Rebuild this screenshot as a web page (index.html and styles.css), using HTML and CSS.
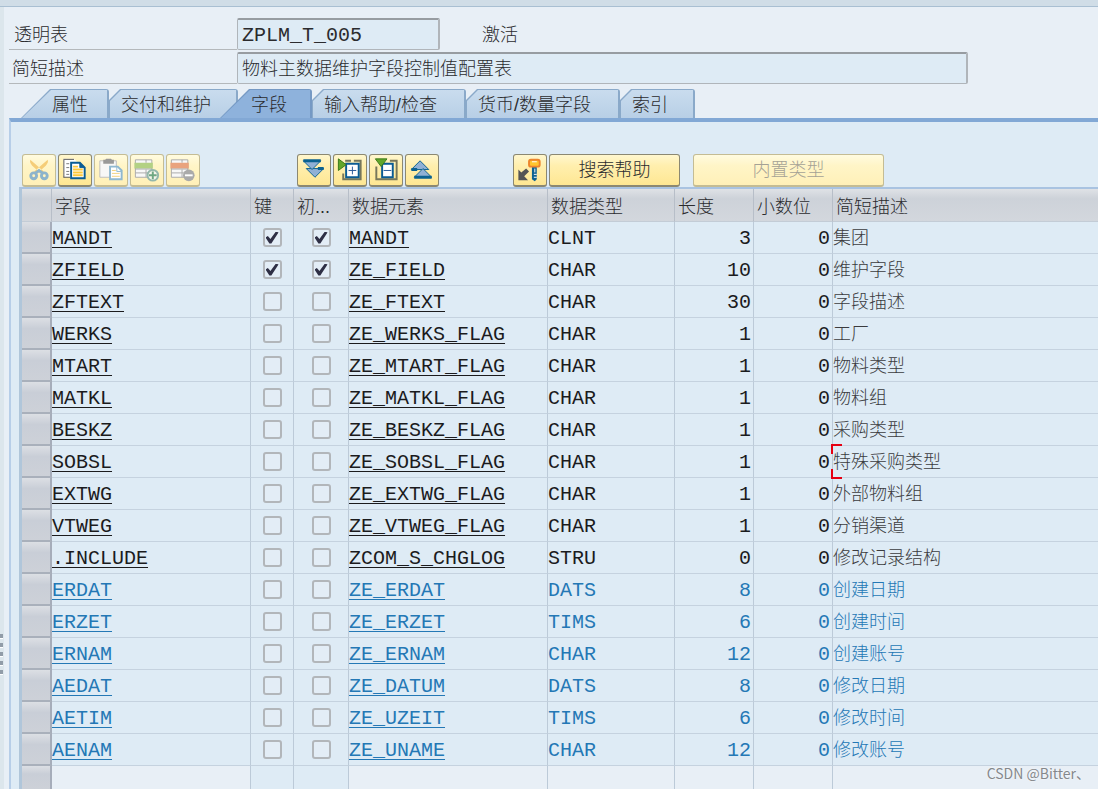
FILE: index.html
```html
<!DOCTYPE html>
<html lang="zh-CN">
<head>
    <meta charset="UTF-8">
    <meta name="viewport" content="width=device-width, initial-scale=1.0">
    <title>ZPLM_T_005</title>
    <link rel="stylesheet" href="styles.css">
</head>
<body>
    <div class="topbar"></div>
    <div class="window">
        <aside class="splitter"><i></i><i></i><i></i><i></i><i></i></aside>

        <main>
            <form class="info">
                <div class="info-row">
                    <label class="indent" for="table-name">透明表</label>
                    <input id="table-name" class="short" type="text" value="ZPLM_T_005" readonly>
                    <span class="status">激活</span>
                </div>
                <div class="info-row">
                    <label for="table-desc">简短描述</label>
                    <input id="table-desc" class="long" type="text" value="物料主数据维护字段控制值配置表" readonly>
                </div>
            </form>

            <nav class="tabs">
                <button class="tab first">属性</button>
                <button class="tab delivery">交付和维护</button>
                <button class="tab active">字段</button>
                <button class="tab check">输入帮助/检查</button>
                <button class="tab currency">货币/数量字段</button>
                <button class="tab index">索引</button>
            </nav>

            <section class="panel">
                <div class="toolbar">
                    <div class="group">
                        <button class="tool" disabled aria-label="剪切">
                            <svg viewBox="0 0 32 31"><path d="M7 5q-1 3 2 6l9 8 3-2zM25 5q1 3-2 6l-9 8-3-2z" fill="#f5cd78"/><g fill="none" stroke="#8db4cb" stroke-width="3"><circle cx="10.5" cy="21.500" r="3"/><circle cx="21.5" cy="21.5" r="3"/><path d="M12 19l4-3 4 3"/></g></svg>
                        </button>
                        <button class="tool" aria-label="复制">
                            <svg viewBox="0 0 32 31"><path d="M4 4h11l3 3v16H4z" fill="#fff"/><path d="M4.5 5v18M4 4.5h11M4 23h7" stroke="#555" fill="none"/><path d="M7 9h3M7 13h3M7 17h3M7 20h3" stroke="#777"/><path d="M12 8h9l5 5v11H12z" fill="#fff" stroke="#0b5c94" stroke-width="2"/><path d="M21 8v5h5z" fill="#0b5c94" stroke="#0b5c94"/><path d="M14 12h5M14 15h10M14 18h10M14 21h10" stroke="#ffc838" stroke-width="2"/></svg>
                        </button>
                        <button class="tool" disabled aria-label="粘贴">
                            <svg viewBox="0 0 32 31"><path d="M4.500 6h17v17h-17z" fill="#f7f7f7" stroke="#bdbdbd"/><path d="M8 5h2l1-1h5l1 1h2v4H8z" fill="#999"/><path d="M15 12h8l4 4v9H15z" fill="#fff" stroke="#8fb8d0" stroke-width="2"/><path d="M22 12v5h5" fill="none" stroke="#8fb8d0"/><path d="M17 16h4M17 19h8M17 22h8" stroke="#f3d27d"/></svg>
                        </button>
                        <button class="tool" disabled aria-label="插入行">
                            <svg viewBox="0 0 32 31"><path d="M4 5h17v18H4z" fill="#f8f8f8" stroke="#aaa"/><path d="M3 8h19v6H3z" fill="#b3d184"/><path d="M4 14.500h17M4 18.500h15M15 5v3M15 15v8" stroke="#aaa"/><circle cx="22" cy="21" r="5.500" fill="#f5f5ea" stroke="#93b7ab" stroke-width="2"/><path d="M22 17v8M18 21h8" stroke="#6fa782" stroke-width="2"/></svg>
                        </button>
                        <button class="tool" disabled aria-label="删除行">
                            <svg viewBox="0 0 32 31"><path d="M4 5h17v18H4z" fill="#f8f8f8" stroke="#aaa"/><path d="M3 8h19v6H3z" fill="#e9a37e"/><path d="M4 14.500h17M4 18.500h15M15 5v3M15 15v8" stroke="#aaa"/><circle cx="22" cy="21" r="6" fill="#aaa"/><path d="M18 21h8" stroke="#fff" stroke-width="2"/></svg>
                        </button>
                    </div>
                    <div class="group expand">
                        <button class="tool" aria-label="全部展开">
                            <svg viewBox="0 0 32 31"><g fill="#8fb0d5" stroke="#0b6291"><path d="M8 14h18l-9 9z"/><path d="M5 6h18l-9 9z"/><path d="M5 6h18M20 14h6" stroke-width="3"/></g></svg>
                        </button>
                        <button class="tool" aria-label="展开">
                            <svg viewBox="0 0 32 31"><path d="M11 6h6M20 6h7v19H9v-6" fill="none" stroke="#77775b" stroke-width="2"/><path d="M14 9h11v14H12V9z" fill="#fff" stroke="#0b5c94" stroke-width="2"/><path d="M18.5 12v8M14.500 16h8" stroke="#275898"/><path d="M4 4l8 6-8 6z" fill="#62a62a" stroke="#397817"/></svg>
                        </button>
                        <button class="tool" aria-label="折叠">
                            <svg viewBox="0 0 32 31"><path d="M20 6h7v19H6V12" fill="none" stroke="#77775b" stroke-width="2"/><path d="M12 9h11v14H12z" fill="#fff" stroke="#0b5c94" stroke-width="2"/><path d="M13.5 16h8" stroke="#275898"/><path d="M5 4h12l-6 8z" fill="#62a62a" stroke="#397817"/></svg>
                        </button>
                        <button class="tool" aria-label="全部折叠">
                            <svg viewBox="0 0 32 31"><g fill="#8fb0d5" stroke="#0b6291"><path d="M5 15h18l-9-9z"/><path d="M8 23h18l-9-9z"/><path d="M5 15h6M8 23h18" stroke-width="3"/></g></svg>
                        </button>
                    </div>
                    <div class="group search">
                        <button class="tool" aria-label="外键">
                            <svg viewBox="0 0 32 31"><path d="M4 15l3 3 5-4 3 3-5 5 4 4H4z" fill="#555"/><path d="M18 12h5v13l-2 2-3-2z" fill="#0b6291"/><path d="M21 14v4M20 20h3M20 23h3" stroke="#fff"/><rect x="15" y="5" width="11" height="7" rx="2" fill="#ffc62d" stroke="#ed852c" stroke-width="2"/><path d="M18 7h5" stroke="#fff"/></svg>
                        </button>
                        <button class="tool help">搜索帮助</button>
                    </div>
                    <button class="tool builtin" disabled>内置类型</button>
                </div>

                <table class="fields">
                    <colgroup>
                        <col class="c-sel"><col class="c-name"><col class="c-key"><col class="c-init"><col class="c-elem"><col class="c-type"><col class="c-num"><col class="c-num"><col>
                    </colgroup>
                    <thead>
                        <tr><th></th><th>字段</th><th>键</th><th>初...</th><th>数据元素</th><th>数据类型</th><th>长度</th><th>小数位</th><th>简短描述</th></tr>
                    </thead>
                    <tbody>
                        <tr>
                            <th></th><td><a href="#">MANDT</a></td>
                            <td class="tick"><input type="checkbox" aria-label="键" checked></td><td class="tick"><input type="checkbox" aria-label="初始值" checked></td>
                            <td><a href="#">MANDT</a></td><td>CLNT</td><td class="num">3</td><td class="num">0</td><td class="desc">集团</td>
                        </tr>
                        <tr>
                            <th></th><td><a href="#">ZFIELD</a></td>
                            <td class="tick"><input type="checkbox" aria-label="键" checked></td><td class="tick"><input type="checkbox" aria-label="初始值" checked></td>
                            <td><a href="#">ZE_FIELD</a></td><td>CHAR</td><td class="num">10</td><td class="num">0</td><td class="desc">维护字段</td>
                        </tr>
                        <tr>
                            <th></th><td><a href="#">ZFTEXT</a></td>
                            <td class="tick"><input type="checkbox" aria-label="键"></td><td class="tick"><input type="checkbox" aria-label="初始值"></td>
                            <td><a href="#">ZE_FTEXT</a></td><td>CHAR</td><td class="num">30</td><td class="num">0</td><td class="desc">字段描述</td>
                        </tr>
                        <tr>
                            <th></th><td><a href="#">WERKS</a></td>
                            <td class="tick"><input type="checkbox" aria-label="键"></td><td class="tick"><input type="checkbox" aria-label="初始值"></td>
                            <td><a href="#">ZE_WERKS_FLAG</a></td><td>CHAR</td><td class="num">1</td><td class="num">0</td><td class="desc">工厂</td>
                        </tr>
                        <tr>
                            <th></th><td><a href="#">MTART</a></td>
                            <td class="tick"><input type="checkbox" aria-label="键"></td><td class="tick"><input type="checkbox" aria-label="初始值"></td>
                            <td><a href="#">ZE_MTART_FLAG</a></td><td>CHAR</td><td class="num">1</td><td class="num">0</td><td class="desc">物料类型</td>
                        </tr>
                        <tr>
                            <th></th><td><a href="#">MATKL</a></td>
                            <td class="tick"><input type="checkbox" aria-label="键"></td><td class="tick"><input type="checkbox" aria-label="初始值"></td>
                            <td><a href="#">ZE_MATKL_FLAG</a></td><td>CHAR</td><td class="num">1</td><td class="num">0</td><td class="desc">物料组</td>
                        </tr>
                        <tr>
                            <th></th><td><a href="#">BESKZ</a></td>
                            <td class="tick"><input type="checkbox" aria-label="键"></td><td class="tick"><input type="checkbox" aria-label="初始值"></td>
                            <td><a href="#">ZE_BESKZ_FLAG</a></td><td>CHAR</td><td class="num">1</td><td class="num">0</td><td class="desc">采购类型</td>
                        </tr>
                        <tr>
                            <th></th><td><a href="#">SOBSL</a></td>
                            <td class="tick"><input type="checkbox" aria-label="键"></td><td class="tick"><input type="checkbox" aria-label="初始值"></td>
                            <td><a href="#">ZE_SOBSL_FLAG</a></td><td>CHAR</td><td class="num">1</td><td class="num">0</td><td class="desc cursor">特殊采购类型</td>
                        </tr>
                        <tr>
                            <th></th><td><a href="#">EXTWG</a></td>
                            <td class="tick"><input type="checkbox" aria-label="键"></td><td class="tick"><input type="checkbox" aria-label="初始值"></td>
                            <td><a href="#">ZE_EXTWG_FLAG</a></td><td>CHAR</td><td class="num">1</td><td class="num">0</td><td class="desc">外部物料组</td>
                        </tr>
                        <tr>
                            <th></th><td><a href="#">VTWEG</a></td>
                            <td class="tick"><input type="checkbox" aria-label="键"></td><td class="tick"><input type="checkbox" aria-label="初始值"></td>
                            <td><a href="#">ZE_VTWEG_FLAG</a></td><td>CHAR</td><td class="num">1</td><td class="num">0</td><td class="desc">分销渠道</td>
                        </tr>
                        <tr>
                            <th></th><td><a href="#">.INCLUDE</a></td>
                            <td class="tick"><input type="checkbox" aria-label="键"></td><td class="tick"><input type="checkbox" aria-label="初始值"></td>
                            <td><a href="#">ZCOM_S_CHGLOG</a></td><td>STRU</td><td class="num">0</td><td class="num">0</td><td class="desc">修改记录结构</td>
                        </tr>
                        <tr class="included">
                            <th></th><td><a href="#">ERDAT</a></td>
                            <td class="tick"><input type="checkbox" aria-label="键"></td><td class="tick"><input type="checkbox" aria-label="初始值"></td>
                            <td><a href="#">ZE_ERDAT</a></td><td>DATS</td><td class="num">8</td><td class="num">0</td><td class="desc">创建日期</td>
                        </tr>
                        <tr class="included">
                            <th></th><td><a href="#">ERZET</a></td>
                            <td class="tick"><input type="checkbox" aria-label="键"></td><td class="tick"><input type="checkbox" aria-label="初始值"></td>
                            <td><a href="#">ZE_ERZET</a></td><td>TIMS</td><td class="num">6</td><td class="num">0</td><td class="desc">创建时间</td>
                        </tr>
                        <tr class="included">
                            <th></th><td><a href="#">ERNAM</a></td>
                            <td class="tick"><input type="checkbox" aria-label="键"></td><td class="tick"><input type="checkbox" aria-label="初始值"></td>
                            <td><a href="#">ZE_ERNAM</a></td><td>CHAR</td><td class="num">12</td><td class="num">0</td><td class="desc">创建账号</td>
                        </tr>
                        <tr class="included">
                            <th></th><td><a href="#">AEDAT</a></td>
                            <td class="tick"><input type="checkbox" aria-label="键"></td><td class="tick"><input type="checkbox" aria-label="初始值"></td>
                            <td><a href="#">ZE_DATUM</a></td><td>DATS</td><td class="num">8</td><td class="num">0</td><td class="desc">修改日期</td>
                        </tr>
                        <tr class="included">
                            <th></th><td><a href="#">AETIM</a></td>
                            <td class="tick"><input type="checkbox" aria-label="键"></td><td class="tick"><input type="checkbox" aria-label="初始值"></td>
                            <td><a href="#">ZE_UZEIT</a></td><td>TIMS</td><td class="num">6</td><td class="num">0</td><td class="desc">修改时间</td>
                        </tr>
                        <tr class="included">
                            <th></th><td><a href="#">AENAM</a></td>
                            <td class="tick"><input type="checkbox" aria-label="键"></td><td class="tick"><input type="checkbox" aria-label="初始值"></td>
                            <td><a href="#">ZE_UNAME</a></td><td>CHAR</td><td class="num">12</td><td class="num">0</td><td class="desc">修改账号</td>
                        </tr>
                        <tr class="blank">
                            <th></th><td></td><td class="tick"></td><td class="tick"></td><td></td><td></td><td></td><td></td><td></td>
                        </tr>
                    </tbody>
                </table>
            </section>
        </main>
    </div>
    <div class="watermark">CSDN @Bitter、</div>
</body>
</html>
```

FILE: styles.css
```css
* {
    box-sizing: border-box;
}

body {
    margin: 0;
    min-height: 100vh;
    display: flex;
    flex-direction: column;
    font-family: "Liberation Sans", "Noto Sans CJK SC", sans-serif;
    font-size: 18px;
    font-weight: 300;
    line-height: 24px;
    color: #2b2b2e;
    background: #e8eff6;
}

button, input {
    font: inherit;
    color: inherit;
    margin: 0;
}

.topbar {
    height: 7px;
    background: #d0dde7;
    border-bottom: 1px solid #a9bfd2;
}

.window {
    flex: 1;
    display: flex;
}

/* Left splitter with its grip */
.splitter {
    width: 4px;
    padding-top: 627px;
    background: #dce6ec;
}

.splitter i {
    display: block;
    width: 3px;
    height: 5px;
    margin-bottom: 4px;
    background: #919ca8;
    border-bottom: 1px solid #fff;
}

main {
    flex: 1;
    min-width: 0;
    display: flex;
    flex-direction: column;
    padding-left: 5px;
}

/* Table name and description */
.info {
    padding-top: 11px;
}

.info-row {
    display: flex;
    height: 32px;
    margin-bottom: 2px;
}

.info-row label {
    width: 228px;
    padding: 5px 3px 0;
    border-bottom: 1px solid #b4b8bb;
}

.info-row label.indent {
    padding-left: 5px;
}

.info-row input {
    padding: 0 4px;
    border: 1px solid #b0b5ba;
    border-top: 2px solid #979ca1;
    border-right-width: 2px;
    border-radius: 2px;
    background: #deebf5;
    outline: none;
}

.info-row .short {
    width: 203px;
    padding-top: 2px;
    font-family: "Liberation Mono", monospace;
    font-size: 20px;
}

.info-row .long {
    width: 731px;
}

.status {
    padding: 5px 0 0 42px;
}

/* Tab strip: the button is the outline, ::before the fill */
.tabs {
    display: flex;
    height: 32px;
    padding: 3px 0 0 12px;
}

.tab {
    position: relative;
    z-index: 0;
    height: 29px;
    padding: 2px 0 0 12px;
    border: none;
    border-radius: 0 3px 0 0;
    text-align: left;
    background: #8aa9c9;
    clip-path: polygon(0 11px, 11px 0, 100% 0, 100% 100%, 0 100%);
}

.tab::before {
    content: "";
    position: absolute;
    z-index: -1;
    inset: 1px 2px 0 1px;
    background: linear-gradient(#c9dcee, #b8cfe6);
    clip-path: polygon(0 11px, 11px 0, 100% 0, 100% 100%, 0 100%);
}

.tab.first {
    width: 88px;
    padding-left: 31px;
}

.tab.first, .tab.first::before,
.tab.active, .tab.active::before {
    clip-path: polygon(0 100%, 29px 0, 100% 0, 100% 100%);
}

.tab.delivery {
    width: 129px;
}

.tab.active {
    width: 92px;
    margin-left: -18px;
    padding-left: 31px;
    background: #7599c4;
}

.tab.active::before {
    background: #8eb2dc;
}

.tab.check,
.tab.currency {
    width: 154px;
}

.tab.index {
    width: 75px;
}

.panel {
    flex: 1;
    padding: 32px 0 0 8px;
    background: #deebf5;
    border-left: 2px solid #b7cee8;
    border-top: 4px solid #82a8d5;
}

.toolbar {
    display: flex;
    padding-left: 3px;
}

.group {
    display: flex;
    gap: 2px;
}

.expand {
    margin-left: 97px;
}

.search {
    margin: 0 13px 0 74px;
}

.tool {
    width: 34px;
    height: 33px;
    padding: 0;
    border: 1px solid #8b8872;
    border-bottom-width: 2px;
    border-radius: 3px;
    background: linear-gradient(#fff7cf, #ffefae 35%, #fee793);
}

.tool:disabled {
    color: #a5a295;
    border-color: #c4bc94;
    background: linear-gradient(#fffbe0, #fff5c7 35%, #fff0b8);
}

.tool svg {
    display: block;
    width: 32px;
    height: 30px;
}

.tool.help {
    width: 131px;
}

.tool.builtin {
    width: 191px;
}

/* Field list */
.fields {
    width: 100%;
    table-layout: fixed;
    border-collapse: separate;
    border-spacing: 0;
    border-top: 2px solid #a9c3e1;
    border-left: 3px solid #b0c6da;
}

.c-sel {
    width: 30px;
}

.c-name, .c-elem {
    width: 199px;
}

.c-key {
    width: 43px;
}

.c-init {
    width: 55px;
}

.c-type {
    width: 127px;
}

.c-num {
    width: 79px;
}

thead th {
    height: 33px;
    padding: 4px 3px 0;
    font-weight: 300;
    text-align: left;
    white-space: nowrap;
    background: linear-gradient(#dfe2e6, #cdd2d9 30%, #d3d7dd);
    border-right: 1px solid #b7bec8;
    border-bottom: 1px solid #c3ccd6;
}

tbody th {
    padding: 0;
    background: linear-gradient(#dcdfe4, #c9ced7 35%, #cdd1d8);
    border-right: 2px solid #a6adba;
    border-bottom: 2px solid #a9b0bb;
}

tbody td {
    height: 32px;
    padding: 3px 2px 0 0;
    font-family: "Liberation Mono", monospace;
    font-size: 20px;
    color: #1b1b1d;
    white-space: nowrap;
    background: #deebf5;
    border-right: 1px solid #bccad8;
    border-bottom: 1px solid #c5d2df;
}

th:last-child,
td:last-child {
    border-right: none;
}

td a {
    color: inherit;
    text-decoration: underline;
    text-decoration-thickness: 1px;
    text-underline-offset: 3px;
}

td.num {
    text-align: right;
}

td.desc {
    padding: 0 0 4px;
    font-family: "Noto Sans CJK SC", sans-serif;
    font-size: 18px;
    color: #3b3b3e;
}

tr.included td {
    color: #2478b5;
}

td.tick {
    padding: 0;
    text-align: center;
    line-height: 0;
}

.tick input {
    appearance: none;
    display: inline-grid;
    place-items: center;
    width: 19px;
    height: 19px;
    border: 2px solid #b2b6ba;
    border-radius: 3px;
    background: #e3edf6;
}

.tick input:checked::before {
    content: "";
    width: 13px;
    height: 12px;
    background: #2e2f45;
    clip-path: polygon(0 50%, 18% 38%, 38% 62%, 80% 0, 100% 8%, 45% 100%, 30% 100%);
}

/* Red corners round the selected cell */
td.cursor {
    position: relative;
}

td.cursor::before,
td.cursor::after {
    content: "";
    position: absolute;
    left: -2px;
    width: 9px;
    height: 8px;
    border-left: 2px solid #e60012;
}

td.cursor::before {
    top: -2px;
    border-top: 2px solid #e60012;
}

td.cursor::after {
    bottom: -2px;
    border-bottom: 2px solid #e60012;
}

tr.blank td {
    height: 23px;
    padding: 0;
    background: #e8eff6;
    border-bottom: none;
}

tr.blank td.tick {
    background: #deebf5;
}

tr.blank th {
    border-bottom: none;
}

.watermark {
    position: absolute;
    right: 8px;
    bottom: 4px;
    font-family: "Noto Sans CJK SC", sans-serif;
    font-size: 14px;
    font-weight: 400;
    color: #85888c;
    text-shadow: 0 0 2px #fff;
}
```
